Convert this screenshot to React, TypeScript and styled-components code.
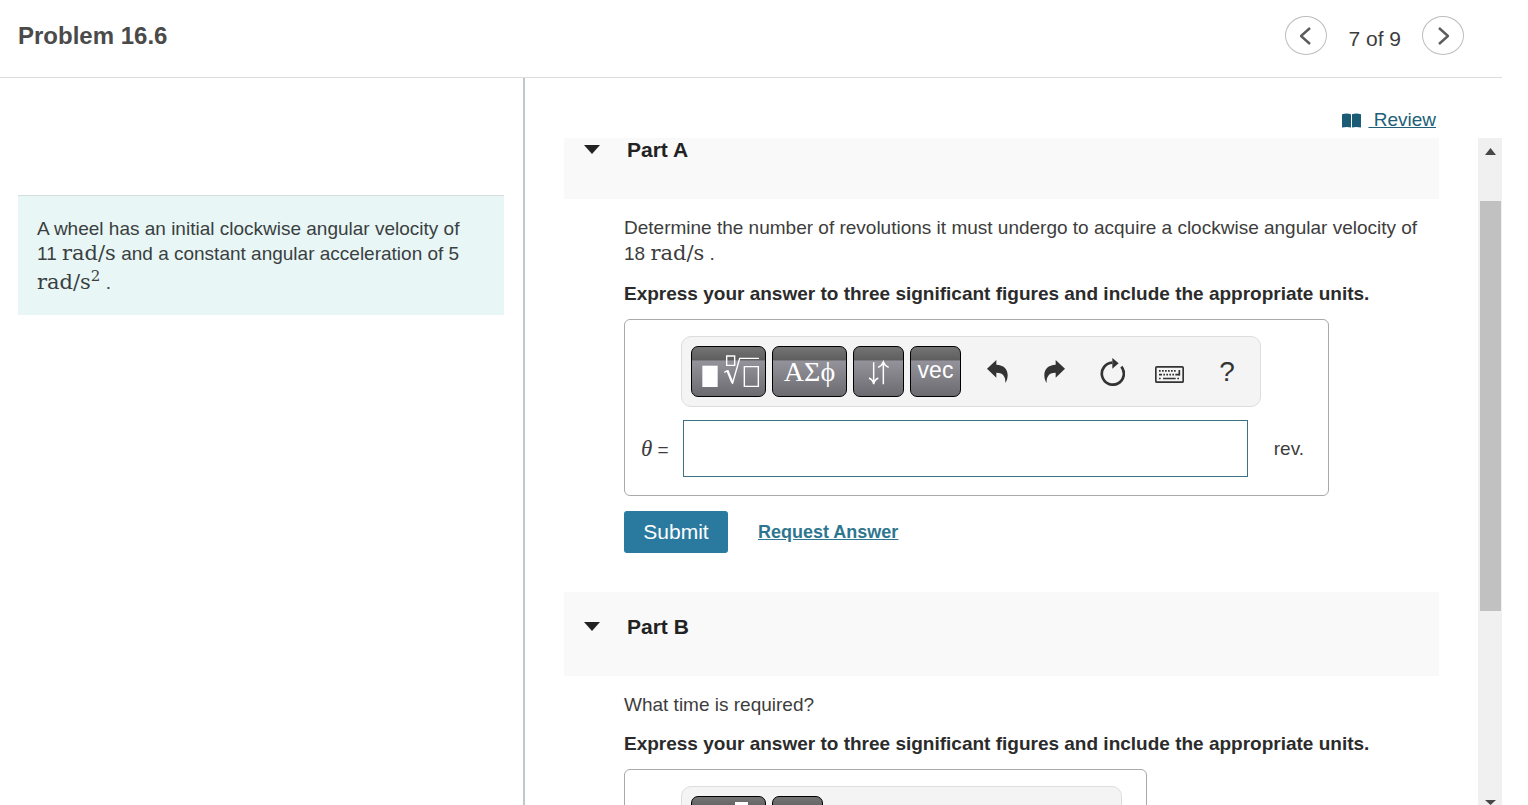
import React, { useId } from "react";
import styled, { createGlobalStyle } from "styled-components";

const sans = `"Liberation Sans", Arial, sans-serif`;
const serif = `"Liberation Serif", "Times New Roman", serif`;
const mathSerif = `"DejaVu Serif", "Liberation Serif", serif`;

const GlobalStyle = createGlobalStyle`
  *, *::before, *::after { box-sizing: border-box; }
  body {
    margin: 0;
    background: #ffffff;
    color: #3d3d3d;
    font-family: ${sans};
    font-size: 19px;
  }
`;

const Page = styled.div`
  display: flex;
  flex-direction: column;
  height: 100vh;
  margin-right: 26px;
  overflow: hidden;
`;

const Header = styled.header`
  display: flex;
  flex: none;
  justify-content: space-between;
  align-items: flex-start;
  padding: 16px 38px 19px 18px;
  border-bottom: 1px solid #dcdcdc;
`;

const Title = styled.h1`
  margin: 0;
  font-size: 24px;
  line-height: 39px;
  font-weight: 700;
  color: #4a4a4a;
`;

const Pager = styled.nav`
  display: flex;
  gap: 21px;
`;

const PagerButton = styled.button`
  display: flex;
  align-items: center;
  justify-content: center;
  width: 42px;
  height: 39px;
  padding: 0;
  border: 1px solid #bdbdbd;
  border-radius: 50%;
  background: #ffffff;
  color: #5c5c5c;
`;

const PagerLabel = styled.span`
  padding-top: 3px;
  font-size: 21px;
  line-height: 39px;
`;

const Columns = styled.main`
  display: flex;
  flex: 1;
  min-height: 0;
`;

const ProblemColumn = styled.section`
  flex: 0 0 525px;
  padding: 117px 19px 0 18px;
  border-right: 2px solid #c0c8cb;
`;

const ProblemCard = styled.p`
  margin: 0;
  padding: 20px 19px;
  border-top: 1px solid #d5dcdc;
  background: #e8f6f6;
  color: #3a3f41;
  line-height: 25px;
`;

const WorkColumn = styled.section`
  display: flex;
  flex: 1;
  flex-direction: column;
  min-width: 0;
`;

const ReviewBar = styled.div`
  display: flex;
  flex: none;
  justify-content: flex-end;
  height: 60px;
  padding: 30px 66px 0 0;
`;

const ReviewLink = styled.a`
  display: flex;
  align-items: center;
  gap: 7px;
  height: 24px;
  color: #215f78;
  text-decoration: none;
  white-space: pre;
  span { text-decoration: underline; }
`;

const ScrollRegion = styled.div`
  display: flex;
  flex: 1;
  min-height: 0;
`;

const Parts = styled.div`
  flex: 1;
  min-width: 0;
  padding: 0 39px;
  overflow: hidden;
`;

const PartHeader = styled.button<{ $clipped?: boolean }>`
  display: flex;
  align-items: flex-end;
  gap: 27px;
  width: 100%;
  height: ${(p) => (p.$clipped ? 61 : 84)}px;
  padding: 0 20px 37px;
  border: 0;
  background: #f9f9f9;
  color: #222222;
  font: 700 21px/24px ${sans};
  svg { margin-bottom: 8px; }
`;

const PartBody = styled.div`
  padding: 16px 0 39px 60px;
`;

const Unit = styled.span`
  font-family: ${mathSerif};
  font-size: 21px;
  line-height: 20px;
`;

const Prompt = styled.p`
  margin: 0;
  line-height: 25px;
  ${Unit} { line-height: 27px; }
`;

const Instruction = styled.p`
  margin: 14px 0 13px;
  font-weight: 700;
  line-height: 25px;
  color: #2b2b2b;
`;

const Exponent = styled.sup`
  font-size: 15px;
  line-height: 20px;
`;

const AnswerBox = styled.div<{ $width: number }>`
  max-width: ${(p) => p.$width}px;
  padding: 16px 24px 18px 16px;
  border: 1px solid #a9a9a9;
  border-radius: 6px;
`;

const Toolbar = styled.div<{ $width: number }>`
  display: flex;
  align-items: center;
  gap: 6px;
  max-width: ${(p) => p.$width}px;
  height: 71px;
  margin-left: 40px;
  padding: 0 9px;
  border: 1px solid #dddddd;
  border-radius: 10px;
  background: #f4f4f4;
`;

const PaletteButton = styled.button<{ $wide?: boolean }>`
  display: flex;
  flex: none;
  align-items: center;
  justify-content: center;
  width: ${(p) => (p.$wide ? 75 : 51)}px;
  height: 51px;
  padding: 0;
  border: 1px solid #000000;
  border-radius: 7px;
  background: linear-gradient(#747474 0, #5e5e5e 27%, #94939b 28%, #6c6b70 100%);
  color: #ffffff;
`;

const GreekLabel = styled.span`
  font-family: ${serif};
  font-size: 28px;
  line-height: 30px;
`;

const VecLabel = styled.span`
  padding-bottom: 4px;
  font-family: ${sans};
  font-size: 23px;
  line-height: 26px;
`;

const ActionGroup = styled.div`
  display: flex;
  flex: 1;
  justify-content: space-between;
  padding: 0 1px 0 7px;
`;

const ActionButton = styled.button`
  display: flex;
  align-items: center;
  justify-content: center;
  width: 46px;
  height: 50px;
  padding: 0;
  border: 0;
  background: none;
  color: #333333;
  font: 28px/30px ${sans};
`;

const AnswerRow = styled.div`
  display: flex;
  align-items: center;
  margin-top: 13px;
`;

const Variable = styled.label`
  flex: none;
  width: 42px;
  i { font-family: ${serif}; font-size: 23px; }
`;

const AnswerInput = styled.input`
  flex: 1;
  min-width: 0;
  height: 57px;
  margin-right: 26px;
  padding: 0 10px;
  border: 1px solid #3c7383;
  background: #ffffff;
  font: 19px ${sans};
`;

const Actions = styled.div`
  display: flex;
  align-items: center;
  gap: 30px;
  margin-top: 15px;
`;

const SubmitButton = styled.button`
  width: 104px;
  height: 42px;
  padding: 0;
  border: 0;
  border-radius: 3px;
  background: #2a7a9f;
  color: #ffffff;
  font: 21px ${sans};
`;

const RequestLink = styled.a`
  color: #2e768f;
  font-size: 18px;
  font-weight: 700;
`;

const ScrollTrack = styled.div`
  display: flex;
  flex: none;
  flex-direction: column;
  align-items: center;
  width: 24px;
  padding: 10px 0 0;
  background: #f0f0f0;
  color: #484848;
`;

const ScrollThumb = styled.div`
  flex: 410;
  width: 21px;
  margin-top: 46px;
  background: #c1c1c1;
`;

const ScrollSpace = styled.div`
  flex: 189;
`;

const Chevron = ({ right }: { right?: boolean }) => (
  <svg width="12" height="18" viewBox="0 0 12 18" fill="none" stroke="currentColor" strokeWidth="2.4">
    <path d={right ? "M2 1l9 8-9 8" : "M10 1L1 9l9 8"} />
  </svg>
);

const Triangle = ({ up, width = 16, height = 9 }: { up?: boolean; width?: number; height?: number }) => (
  <svg width={width} height={height} viewBox="0 0 16 9" preserveAspectRatio="none" fill="currentColor">
    <path d={up ? "M8 0l8 9H0z" : "M0 0h16L8 9z"} />
  </svg>
);

const BookIcon = () => (
  <svg width="19" height="15" viewBox="0 0 19 15" fill="#1b5b76">
    <path d="M0 1.2C3 .3 6.5 .3 9 1.2V14.500C6.500 13.700 3 13.700 0 14.500zM10 1.200C12.500 .3 16 .3 19 1.200V14.500C16 13.700 12.500 13.700 10 14.500z" />
  </svg>
);

const RootIcon = () => (
  <svg width="64" height="35" viewBox="81 87 192 105" fill="none" stroke="currentColor" strokeWidth="4.2">
    <path d="M97 122h46v64H97z" fill="currentColor" stroke="none" />
    <path d="M170 93h24v28h-24zM223 125h42v59h-42z" />
    <path d="M163 142l10-5" />
    <path d="M172 136l15 37" strokeWidth="7" />
    <path d="M187 177l22-77h58" />
  </svg>
);

const SwapIcon = () => (
  <svg width="21" height="27" viewBox="594 99 63 81" fill="none" stroke="currentColor" strokeWidth="4.5">
    <path d="M611 112v64M597 159c7 3 12 9 14 18 2-9 7-15 14-18M640 178v-64M624 127c8-3 13-8 16-16 3 8 8 13 16 16" />
  </svg>
);

const UndoIcon = ({ redo }: { redo?: boolean }) => (
  <svg width="21" height="23" viewBox="0 0 63 69" fill="currentColor">
    <path
      transform={redo ? "translate(63 0) scale(-1 1)" : undefined}
      d="M0 26L28 0V14C50 15 62 27 62 45C62 54 60 62 55 69C56 53 51 38 28 38V53z"
    />
  </svg>
);

const ResetIcon = () => (
  <svg width="25" height="28" viewBox="0 0 75 84">
    <path d="M64 26A33 33 0 1 1 37 14" fill="none" stroke="currentColor" strokeWidth="8" />
    <path d="M37 0L56 16 37 32z" fill="currentColor" />
  </svg>
);

const KeyboardIcon = () => (
  <svg width="29" height="23" viewBox="0 -18 87 69" fill="none" stroke="currentColor">
    <rect x="2.500" y="2.500" width="82" height="46" rx="3" strokeWidth="5" />
    <path d="M12 14.500h54M12 37.500h6M67 37.500h6" strokeWidth="5" strokeDasharray="5 4" />
    <path d="M12 26h9M25 26h5M34 26h5M43 26h5M52 26h5M61 26h14M24 37.500h38" strokeWidth="5" />
    <path d="M73 12v16" strokeWidth="5" />
  </svg>
);

const TemplateIcon = () => (
  <svg width="59" height="40" viewBox="0 0 59 40" fill="none" stroke="currentColor" strokeWidth="1.300">
    <path d="M36 0h13v14H36z" fill="currentColor" stroke="none" />
    <path d="M31 19h24M36 23h13v14H36zM8 10h15v20H8z" />
  </svg>
);

const Part = ({ name, clipped, children }: { name: string; clipped?: boolean; children: React.ReactNode }) => (
  <section>
    <PartHeader $clipped={clipped} aria-expanded="true">
      <Triangle />
      {name}
    </PartHeader>
    <PartBody>{children}</PartBody>
  </section>
);

const EditActions = () => (
  <ActionGroup>
    <ActionButton aria-label="Undo"><UndoIcon /></ActionButton>
    <ActionButton aria-label="Redo"><UndoIcon redo /></ActionButton>
    <ActionButton aria-label="Reset"><ResetIcon /></ActionButton>
    <ActionButton aria-label="Keyboard shortcuts"><KeyboardIcon /></ActionButton>
    <ActionButton aria-label="Help">?</ActionButton>
  </ActionGroup>
);

export default function App() {
  const thetaId = useId();

  return (
    <>
      <GlobalStyle />
      <Page>
        <Header>
          <Title>Problem 16.6</Title>
          <Pager aria-label="Problems">
            <PagerButton aria-label="Previous"><Chevron /></PagerButton>
            <PagerLabel>7 of 9</PagerLabel>
            <PagerButton aria-label="Next"><Chevron right /></PagerButton>
          </Pager>
        </Header>

        <Columns>
          <ProblemColumn>
            <ProblemCard>
              A wheel has an initial clockwise angular velocity of 11&nbsp;<Unit>rad/s</Unit> and a constant
              angular acceleration of 5 <Unit>rad/s<Exponent>2</Exponent></Unit> .
            </ProblemCard>
          </ProblemColumn>

          <WorkColumn>
            <ReviewBar>
              <ReviewLink href="#review"><BookIcon /><span> Review</span></ReviewLink>
            </ReviewBar>

            <ScrollRegion>
              <Parts>
                <Part name="Part A" clipped>
                  <Prompt>
                    Determine the number of revolutions it must undergo to acquire a clockwise angular
                    velocity of 18&nbsp;<Unit>rad/s</Unit> .
                  </Prompt>
                  <Instruction>
                    Express your answer to three significant figures and include the appropriate units.
                  </Instruction>
                  <AnswerBox $width={705}>
                    <Toolbar $width={580}>
                      <PaletteButton $wide aria-label="Templates"><RootIcon /></PaletteButton>
                      <PaletteButton $wide><GreekLabel>ΑΣϕ</GreekLabel></PaletteButton>
                      <PaletteButton aria-label="Arrows"><SwapIcon /></PaletteButton>
                      <PaletteButton><VecLabel>vec</VecLabel></PaletteButton>
                      <EditActions />
                    </Toolbar>
                    <AnswerRow>
                      <Variable htmlFor={thetaId}><i>θ</i> =</Variable>
                      <AnswerInput id={thetaId} type="text" />
                      <span>rev.</span>
                    </AnswerRow>
                  </AnswerBox>
                  <Actions>
                    <SubmitButton type="submit">Submit</SubmitButton>
                    <RequestLink href="#request-answer">Request Answer</RequestLink>
                  </Actions>
                </Part>

                <Part name="Part B">
                  <Prompt>What time is required?</Prompt>
                  <Instruction>
                    Express your answer to three significant figures and include the appropriate units.
                  </Instruction>
                  <AnswerBox $width={523}>
                    <Toolbar $width={442}>
                      <PaletteButton $wide aria-label="Templates"><TemplateIcon /></PaletteButton>
                      <PaletteButton aria-label="Units" />
                    </Toolbar>
                  </AnswerBox>
                </Part>
              </Parts>

              <ScrollTrack aria-hidden="true">
                <Triangle up width={11} height={7} />
                <ScrollThumb />
                <ScrollSpace />
                <Triangle width={11} height={5} />
              </ScrollTrack>
            </ScrollRegion>
          </WorkColumn>
        </Columns>
      </Page>
    </>
  );
}
